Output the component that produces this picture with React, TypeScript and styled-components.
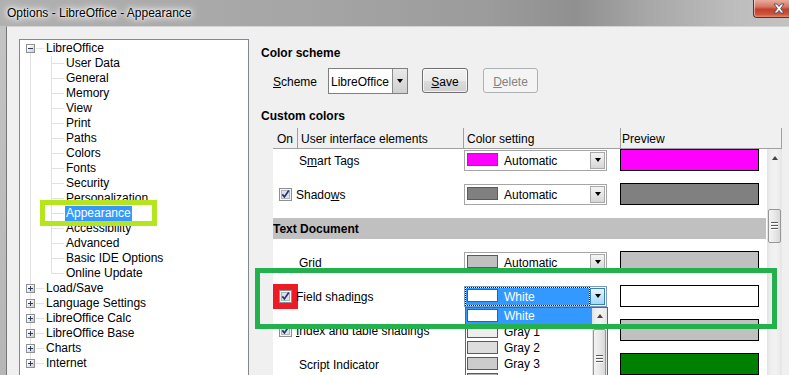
import React from 'react';
import styled, { createGlobalStyle } from 'styled-components';

const Global = createGlobalStyle`
  html, body { margin: 0; padding: 0; width: 789px; height: 375px; overflow: hidden; background: #bdbdbd; }
  body { font-family: "Liberation Sans", Arial, sans-serif; font-size: 12px; color: #000; }
  #root { width: 789px; height: 375px; }
`;

const Window = styled.div`
  width: 789px;
  height: 375px;
  display: flex;
  flex-direction: column;
  overflow: hidden;
  background: linear-gradient(to bottom, #c4c4c4, #b6b6b6);
`;

const TitleBar = styled.div`
  height: 26px;
  flex: none;
  display: flex;
  align-items: flex-start;
  background: linear-gradient(to right, #b0b0b0 0%, #a5a5a5 40%, #9b9b9b 62%, #909090 73%, #a7a7a7 82%, #bdbdbd 93%, #c2c2c2 100%);
`;

const Title = styled.span`
  margin: 6px 0 0 7px;
  line-height: 15px;
  font-size: 12px;
  color: #000;
  text-shadow: 0 0 12px #fff, 0 0 8px #fff, 0 0 5px #fff, 0 0 2px #fff;
`;

const CloseButton = styled.div`
  margin-left: auto;
  width: 36px;
  height: 18px;
  box-sizing: border-box;
  border: 1px solid #6b2b20;
  border-top: none;
  border-right: none;
  border-radius: 0 0 0 4px;
  background: linear-gradient(to bottom, #e9ab9c 0%, #d67563 40%, #c2402a 55%, #d0553d 85%, #e28a72 100%);
  box-shadow: inset 1px 0 0 rgba(255, 255, 255, 0.5);
  display: flex;
  align-items: center;
  padding-left: 19px;
`;

const Client = styled.div`
  flex: 1;
  min-height: 0;
  display: flex;
  margin-left: 6px;
  background: #f0f0f0;
  border-left: 1px solid #767676;
  border-top: 1px solid #d4d4d4;
  overflow: hidden;
`;

/* ---------- Tree ---------- */

const Tree = styled.div`
  position: relative;
  flex: none;
  margin: 12px 0 0 12px;
  width: 230px;
  height: 380px;
  box-sizing: border-box;
  border: 1px solid #828790;
  background: #fff;
`;

const TreeBody = styled.div`
  position: relative;
  padding-top: 1px;
  &::before {
    content: '';
    position: absolute;
    left: 10px;
    top: 13px;
    height: 310px;
    border-left: 1px solid #e2e2e2;
  }
`;

const ChildGroup = styled.div`
  position: relative;
  &::before {
    content: '';
    position: absolute;
    left: 31px;
    top: 0;
    height: 218px;
    border-left: 1px solid #e2e2e2;
  }
`;

const TreeRow = styled.div<{ $level: number }>`
  position: relative;
  height: 15px;
  line-height: 15px;
  white-space: nowrap;
  padding-left: ${(p) => (p.$level === 0 ? 26 : 46)}px;
  &::before {
    content: '';
    position: absolute;
    top: 7px;
    left: ${(p) => (p.$level === 0 ? 16 : 32)}px;
    width: ${(p) => (p.$level === 0 ? 8 : 12)}px;
    border-top: 1px solid #e2e2e2;
  }
`;

const Expander = styled.span`
  position: absolute;
  left: 6px;
  top: 3px;
  width: 9px;
  height: 9px;
  box-sizing: border-box;
  border: 1px solid #919191;
  background: linear-gradient(to bottom right, #ffffff 20%, #c9c9c9 100%);
  z-index: 1;
  &::before {
    content: '';
    position: absolute;
    left: 1px;
    top: 3px;
    width: 5px;
    height: 1px;
    background: #2e3b55;
  }
  &[data-plus='true']::after {
    content: '';
    position: absolute;
    left: 3px;
    top: 1px;
    width: 1px;
    height: 5px;
    background: #2e3b55;
  }
`;

const TreeLabel = styled.span<{ $selected?: boolean }>`
  display: inline-block;
  height: 15px;
  padding: 0 1px;
  margin-left: -1px;
  background: ${(p) => (p.$selected ? '#3399ff' : 'transparent')};
  color: ${(p) => (p.$selected ? '#fff' : '#000')};
`;

const LimeMark = styled.div`
  position: absolute;
  left: 20px;
  top: 160px;
  width: 117px;
  height: 26px;
  box-sizing: border-box;
  border: 5px solid #b5e61d;
  pointer-events: none;
  z-index: 2;
`;

/* ---------- Right panel ---------- */

const RightPanel = styled.div`
  flex: 1;
  margin-left: 12px;
  display: flex;
  flex-direction: column;
`;

const Heading = styled.div<{ $top: number }>`
  margin-top: ${(p) => p.$top}px;
  font-weight: bold;
  line-height: 17px;
`;

const SchemeRow = styled.div`
  margin-top: 5px;
  padding-left: 12px;
  height: 27px;
  display: flex;
  align-items: center;
`;

const FieldLabel = styled.span`
  width: 55px;
  padding-top: 2px;
`;

const Select = styled.div`
  width: 80px;
  height: 26px;
  box-sizing: border-box;
  border: 1px solid #7f7f7f;
  background: #fff;
  display: flex;
  align-items: center;
  padding: 0 0 0 2px;
`;

const SelectText = styled.span`
  padding-top: 2px;
`;

const SelectArrow = styled.span`
  margin-left: auto;
  width: 15px;
  height: 24px;
  box-sizing: border-box;
  border-left: 1px solid #8a8a8a;
  background: linear-gradient(to bottom, #e9e9e9, #cfcfcf);
  display: flex;
  align-items: center;
  justify-content: center;
`;

const Triangle = styled.span<{ $up?: boolean; $color?: string }>`
  width: 0;
  height: 0;
  border-left: 3.5px solid transparent;
  border-right: 3.5px solid transparent;
  ${(p) =>
    p.$up
      ? `border-bottom: 4px solid ${p.$color || '#444'};`
      : `border-top: 4px solid ${p.$color || '#000'};`}
`;

const Button = styled.div<{ $disabled?: boolean; $width: number; $gap: number }>`
  margin-left: ${(p) => p.$gap}px;
  width: ${(p) => p.$width}px;
  height: 25px;
  box-sizing: border-box;
  border: 1px solid ${(p) => (p.$disabled ? '#adb2b5' : '#707070')};
  border-radius: 3px;
  background: ${(p) =>
    p.$disabled ? '#f4f4f4' : 'linear-gradient(to bottom, #f2f2f2 0%, #ebebeb 50%, #dddddd 51%, #cfcfcf 100%)'};
  box-shadow: ${(p) => (p.$disabled ? 'none' : 'inset 0 0 0 1px rgba(255,255,255,0.7)')};
  color: ${(p) => (p.$disabled ? '#838383' : '#000')};
  display: flex;
  align-items: center;
  justify-content: center;
  padding-top: 2px;
`;

/* ---------- Table ---------- */

const Table = styled.div`
  position: relative;
  margin: 3px 0 0 12px;
  width: 509px;
  flex: 1;
  min-height: 0;
  display: flex;
  flex-direction: column;
`;

const Header = styled.div`
  height: 21px;
  flex: none;
  box-sizing: border-box;
  display: flex;
  border-bottom: 1px solid #a0a0a0;
`;

const HeaderCell = styled.div<{ $width?: number; $pad: number }>`
  ${(p) => (p.$width ? `width: ${p.$width}px; flex: none;` : 'flex: 1;')}
  box-sizing: border-box;
  padding-left: ${(p) => p.$pad}px;
  padding-top: 2px;
  border-right: 1px solid #a0a0a0;
  line-height: 18px;
  white-space: nowrap;
`;

const TableBody = styled.div`
  flex: 1;
  min-height: 0;
  display: flex;
`;

const RowsViewport = styled.div`
  flex: 1;
  background: #fff;
  overflow: hidden;
`;

const Rows = styled.div`
  margin-top: -6px;
  display: grid;
  grid-template-columns: 21px 170px 156px 1fr;
  grid-auto-rows: 34px;
  align-items: center;
`;

const CheckCell = styled.div`
  padding-left: 6px;
  display: flex;
  align-items: center;
`;

const CheckBox = styled.span<{ $marked?: boolean }>`
  display: inline-flex;
  width: 13px;
  height: 13px;
  ${(p) => (p.$marked ? 'box-shadow: 0 0 0 6px #ed1c24;' : '')}
`;

const LabelCell = styled.div<{ $pad: number }>`
  padding-left: ${(p) => p.$pad}px;
  padding-top: 2px;
  white-space: nowrap;
`;

const ComboWrap = styled.div`
  position: relative;
  width: 143px;
  height: 21px;
`;

const Combo = styled.div<{ $focused?: boolean }>`
  width: 143px;
  height: 21px;
  box-sizing: border-box;
  border: 1px solid ${(p) => (p.$focused ? '#7a9cc4' : '#a5a5a5')};
  background: #fff;
  display: flex;
  align-items: center;
  padding: 1px;
`;

const ComboInner = styled.div<{ $focused?: boolean }>`
  flex: 1;
  height: 17px;
  box-sizing: border-box;
  display: flex;
  align-items: center;
  padding-left: 1px;
  padding-bottom: 1px;
  background: ${(p) => (p.$focused ? '#3399ff' : 'transparent')};
  color: ${(p) => (p.$focused ? '#fff' : '#000')};
  outline: ${(p) => (p.$focused ? '1px dotted #000' : 'none')};
`;

const Swatch = styled.span<{ $color: string }>`
  flex: none;
  width: 31px;
  height: 13px;
  box-sizing: border-box;
  border: 1px solid #5a5a5a;
  background: ${(p) => p.$color};
`;

const SwatchText = styled.span<{ $drop?: number }>`
  margin-left: 6px;
  padding-top: ${(p) => p.$drop ?? 0}px;
  white-space: nowrap;
`;

const ComboArrow = styled.span<{ $focused?: boolean }>`
  flex: none;
  width: 15px;
  height: 17px;
  margin-left: 1px;
  box-sizing: border-box;
  border: 1px solid ${(p) => (p.$focused ? '#3c7fb1' : '#a9a9a9')};
  background: ${(p) =>
    p.$focused
      ? 'linear-gradient(to bottom, #eaf6fd 0%, #bee6fd 50%, #a7d9f5 100%)'
      : 'linear-gradient(to bottom, #f4f4f4 0%, #e6e6e6 50%, #d6d6d6 100%)'};
  display: flex;
  align-items: center;
  justify-content: center;
`;

const Preview = styled.div<{ $color: string }>`
  width: 139px;
  height: 22px;
  box-sizing: border-box;
  border: 1px solid #000;
  background: ${(p) => p.$color};
`;

const SectionBand = styled.div`
  grid-column: 1 / -1;
  height: 21px;
  box-sizing: border-box;
  margin-right: 1px;
  padding-top: 2px;
  background: #c0c0c0;
  font-weight: bold;
  line-height: 19px;
`;

const DropList = styled.div`
  position: absolute;
  left: 1px;
  top: 100%;
  width: 143px;
  height: 90px;
  box-sizing: border-box;
  border: 1px solid #646464;
  background: #fff;
  display: flex;
  z-index: 3;
`;

const DropItems = styled.div`
  flex: 1;
  display: flex;
  flex-direction: column;
`;

const DropItem = styled.div<{ $selected?: boolean }>`
  height: 16px;
  flex: none;
  display: flex;
  align-items: center;
  padding-left: 1px;
  background: ${(p) => (p.$selected ? '#3399ff' : 'transparent')};
  color: ${(p) => (p.$selected ? '#fff' : '#000')};
`;

const ScrollBar = styled.div`
  flex: none;
  width: 15px;
  display: flex;
  flex-direction: column;
  align-items: center;
  background: linear-gradient(to right, #e2e2e2 0%, #efefef 25%, #f2f2f2 60%, #e6e6e6 100%);
`;

const ScrollArrow = styled.div`
  height: 17px;
  width: 15px;
  flex: none;
  display: flex;
  align-items: center;
  justify-content: center;
`;

const Thumb = styled.div<{ $top: number; $height: number }>`
  margin-top: ${(p) => p.$top}px;
  width: 13px;
  height: ${(p) => p.$height}px;
  flex: none;
  box-sizing: border-box;
  border: 1px solid #979797;
  border-radius: 2px;
  background: linear-gradient(to right, #f3f3f3 0%, #e8e8e8 50%, #d8d8d8 100%);
  display: flex;
  flex-direction: column;
  align-items: center;
  justify-content: center;
  gap: 1px;
`;

const Grip = styled.span`
  width: 7px;
  height: 1px;
  background: #5a5a5a;
  box-shadow: 0 1px 0 #fff;
  margin-bottom: 1px;
`;

const GreenMark = styled.div`
  position: absolute;
  left: -18px;
  top: 140px;
  width: 522px;
  height: 61px;
  box-sizing: border-box;
  border: 5px solid #22b14c;
  pointer-events: none;
  z-index: 4;
`;

/* ---------- Icons ---------- */

const CheckIcon = () => (
  <svg width="13" height="13" viewBox="0 0 13 13">
    <rect x="0.5" y="0.5" width="12" height="12" fill="#f6f6f6" stroke="#8e8f8f" />
    <rect x="2.5" y="2.5" width="8" height="8" fill="#dde1e8" stroke="#b0b6bf" />
    <path d="M3.3 6.4 L5.4 8.9 L9.8 2.6" stroke="#23357a" strokeWidth="1.7" fill="none" />
  </svg>
);

const CloseX = () => (
  <svg width="12" height="11" viewBox="0 0 12 11">
    <path
      d="M1 1 H4 L6 3.5 L8 1 H11 L7.6 5.5 L11 10 H8 L6 7.5 L4 10 H1 L4.4 5.5 Z"
      fill="#fff"
      stroke="#4a4a5a"
      strokeWidth="0.9"
      strokeLinejoin="round"
    />
  </svg>
);

/* ---------- Data ---------- */

const children = [
  'User Data',
  'General',
  'Memory',
  'View',
  'Print',
  'Paths',
  'Colors',
  'Fonts',
  'Security',
  'Personalization',
  'Appearance',
  'Accessibility',
  'Advanced',
  'Basic IDE Options',
  'Online Update',
];

const otherRoots = ['Load/Save', 'Language Settings', 'LibreOffice Calc', 'LibreOffice Base', 'Charts', 'Internet'];

type Item =
  | { kind: 'section'; label: string }
  | {
      kind: 'item';
      label: React.ReactNode;
      check: boolean;
      color: string;
      name: string;
      open?: boolean;
      covered?: boolean;
    };

const rows: Item[] = [
  { kind: 'item', label: <>S<u>m</u>art Tags</>, check: false, color: '#ff00ff', name: 'Automatic' },
  { kind: 'item', label: <>Shado<u>w</u>s</>, check: true, color: '#808080', name: 'Automatic' },
  { kind: 'section', label: 'Text Document' },
  { kind: 'item', label: <><u>G</u>rid</>, check: false, color: '#c0c0c0', name: 'Automatic' },
  { kind: 'item', label: <>Field shadi<u>n</u>gs</>, check: true, color: '#ffffff', name: 'White', open: true },
  { kind: 'item', label: <><u>I</u>ndex and table shadings</>, check: true, color: '#c0c0c0', name: 'Automatic', covered: true },
  { kind: 'item', label: 'Script Indicator', check: false, color: '#008000', name: 'Automatic', covered: true },
];

const dropOptions = [
  { name: 'White', color: '#ffffff' },
  { name: 'Gray 1', color: '#eeeeee' },
  { name: 'Gray 2', color: '#dddddd' },
  { name: 'Gray 3', color: '#cccccc' },
  { name: 'Gray 4', color: '#b2b2b2' },
];

export default function App() {
  return (
    <Window>
      <Global />
      <TitleBar>
        <Title>Options - LibreOffice - Appearance</Title>
        <CloseButton>
          <CloseX />
        </CloseButton>
      </TitleBar>
      <Client>
        <Tree>
          <TreeBody>
            <TreeRow $level={0}>
              <Expander />
              <TreeLabel>LibreOffice</TreeLabel>
            </TreeRow>
            <ChildGroup>
              {children.map((c) => (
                <TreeRow key={c} $level={1}>
                  <TreeLabel $selected={c === 'Appearance'}>{c}</TreeLabel>
                </TreeRow>
              ))}
            </ChildGroup>
            {otherRoots.map((r) => (
              <TreeRow key={r} $level={0}>
                <Expander data-plus="true" />
                <TreeLabel>{r}</TreeLabel>
              </TreeRow>
            ))}
          </TreeBody>
          <LimeMark />
        </Tree>
        <RightPanel>
          <Heading $top={18}>Color scheme</Heading>
          <SchemeRow>
            <FieldLabel>
              <u>S</u>cheme
            </FieldLabel>
            <Select>
              <SelectText>LibreOffice</SelectText>
              <SelectArrow>
                <Triangle />
              </SelectArrow>
            </Select>
            <Button $width={46} $gap={14}>
              <span>
                <u>S</u>ave
              </span>
            </Button>
            <Button $width={55} $gap={15} $disabled>
              <span>
                <u>D</u>elete
              </span>
            </Button>
          </SchemeRow>
          <Heading $top={14}>Custom colors</Heading>
          <Table>
            <Header>
              <HeaderCell $width={25} $pad={4}>On</HeaderCell>
              <HeaderCell $width={166} $pad={3}>User interface elements</HeaderCell>
              <HeaderCell $width={157} $pad={3}>Color setting</HeaderCell>
              <HeaderCell $pad={1}>Preview</HeaderCell>
            </Header>
            <TableBody>
              <RowsViewport>
                <Rows>
                  {rows.map((r, i) =>
                    r.kind === 'section' ? (
                      <SectionBand key={i}>{r.label}</SectionBand>
                    ) : (
                      <React.Fragment key={i}>
                        <CheckCell>
                          {r.check && (
                            <CheckBox $marked={r.open}>
                              <CheckIcon />
                            </CheckBox>
                          )}
                        </CheckCell>
                        <LabelCell $pad={r.check ? 2 : 5}>{r.label}</LabelCell>
                        <ComboWrap>
                          {!r.covered && (
                            <Combo $focused={r.open}>
                              <ComboInner $focused={r.open}>
                                <Swatch $color={r.color} />
                                <SwatchText $drop={3}>{r.name}</SwatchText>
                              </ComboInner>
                              <ComboArrow $focused={r.open}>
                                <Triangle />
                              </ComboArrow>
                            </Combo>
                          )}
                          {r.open && (
                            <DropList>
                              <DropItems>
                                {dropOptions.map((o, j) => (
                                  <DropItem key={o.name} $selected={j === 0}>
                                    <Swatch $color={o.color} />
                                    <SwatchText>{o.name}</SwatchText>
                                  </DropItem>
                                ))}
                              </DropItems>
                              <ScrollBar>
                                <ScrollArrow>
                                  <Triangle $up />
                                </ScrollArrow>
                                <Thumb $top={4} $height={60}>
                                  <Grip />
                                  <Grip />
                                  <Grip />
                                </Thumb>
                              </ScrollBar>
                            </DropList>
                          )}
                        </ComboWrap>
                        <Preview $color={r.color} />
                      </React.Fragment>
                    )
                  )}
                </Rows>
              </RowsViewport>
              <ScrollBar>
                <ScrollArrow>
                  <Triangle $up />
                </ScrollArrow>
                <Thumb $top={43} $height={34}>
                  <Grip />
                  <Grip />
                  <Grip />
                </Thumb>
              </ScrollBar>
            </TableBody>
            <GreenMark />
          </Table>
        </RightPanel>
      </Client>
    </Window>
  );
}
